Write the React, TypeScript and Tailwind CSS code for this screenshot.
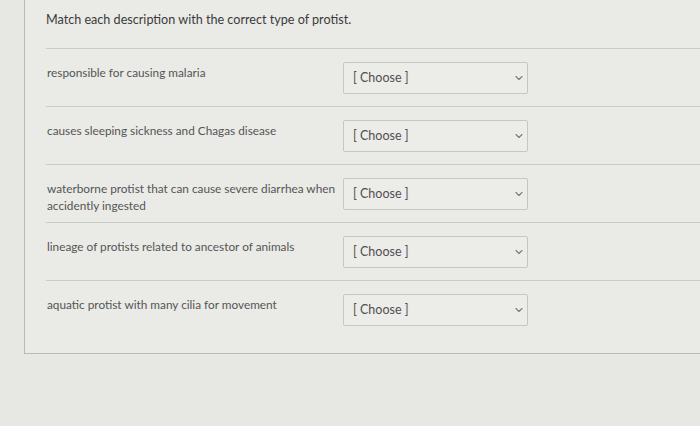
import { ChevronDown } from "lucide-react";

const ROWS = [
  "responsible for causing malaria",
  "causes sleeping sickness and Chagas disease",
  "waterborne protist that can cause severe diarrhea when accidently ingested",
  "lineage of protists related to ancestor of animals",
  "aquatic protist with many cilia for movement",
];

function ChooseSelect() {
  return (
    <div className="flex h-[32px] w-[185px] shrink-0 items-center justify-between rounded-[2px] border border-[#c6c6c3] bg-[#ecece9] pl-[9px] pr-[2px]">
      <span className="text-[12.5px] text-[#505050]">[ Choose ]</span>
      <ChevronDown size={12} strokeWidth={2.2} className="text-[#7a7a7a]" />
    </div>
  );
}

export default function App() {
  return (
    <div
      className="h-[426px] w-[700px] overflow-hidden bg-[#e7e7e4]"
      style={{ fontFamily: "Lato, 'Open Sans', sans-serif" }}
    >
      <div className="ml-[24px] h-[354px] border-b border-l border-[#b9b9b6] bg-[#eaeae7] pl-[21px]">
        <div className="h-[48px] pt-[11px] text-[12.6px] text-[#3a3a3a]">
          Match each description with the correct type of protist.
        </div>
        {ROWS.map((text) => (
          <div
            key={text}
            className="flex h-[58px] items-start gap-[6px] border-t border-[#cacac7] pt-[13px]"
          >
            <p className="w-[291px] pl-[1px] pt-[2px] text-[11.8px] leading-[17px] text-[#555555]">
              {text}
            </p>
            <ChooseSelect />
          </div>
        ))}
      </div>
    </div>
  );
}
